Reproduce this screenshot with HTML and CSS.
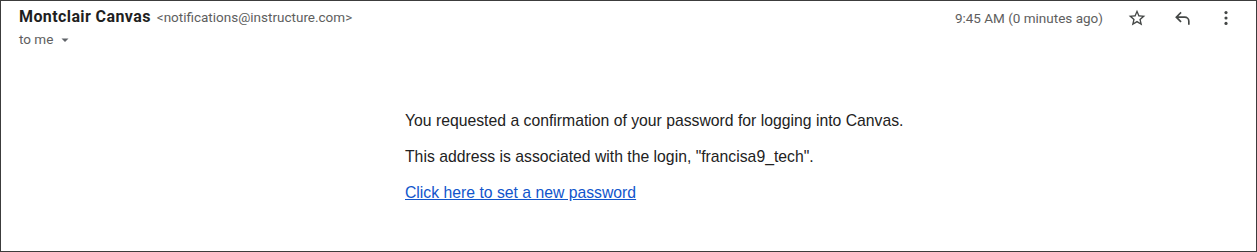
FILE: index.html
```html
<!DOCTYPE html>
<html>
<head>
<meta charset="utf-8">
<link rel="stylesheet" href="styles.css">
</head>
<body>
<div class="frame">
  <div class="header">
    <div class="sender">
      <div class="from"><span class="name">Montclair Canvas</span> <span class="addr">&lt;notifications@instructure.com&gt;</span></div>
      <div class="to">to me <svg class="caret" width="8" height="8" viewBox="0 0 8 8"><path d="M0.5 2.5h7L4 6z" fill="#5f6368"/></svg></div>
    </div>
    <div class="meta">
      <span class="time">9:45 AM (0 minutes ago)</span>
      <span class="icon star"><svg width="20" height="20" viewBox="0 0 24 24"><path fill="#444746" d="M22 9.24l-7.19-.62L12 2 9.19 8.63 2 9.24l5.46 4.73L5.82 21 12 17.27 18.18 21l-1.63-7.03L22 9.24zM12 15.4l-3.76 2.27 1-4.28-3.32-2.88 4.38-.38L12 6.1l1.71 4.04 4.38.38-3.320 2.88 1 4.28L12 15.4z"/></svg></span>
      <span class="icon reply"><svg width="20" height="20" viewBox="0 0 24 24"><path fill="none" stroke="#444746" stroke-width="2" stroke-linecap="square" stroke-linejoin="miter" d="M9 6l-5 5 5 5M4.5 11H14a5 5 0 0 1 5 5v3"/></svg></span>
      <span class="icon more"><svg width="20" height="20" viewBox="0 0 24 24"><circle cx="12" cy="5.5" r="1.9" fill="#444746"/><circle cx="12" cy="12" r="1.9" fill="#444746"/><circle cx="12" cy="18.5" r="1.9" fill="#444746"/></svg></span>
    </div>
  </div>
  <div class="content">
    <div class="mail">
      <p>You requested a confirmation of your password for logging into Canvas.</p>
      <p>This address is associated with the login, "francisa9_tech".</p>
      <p><a href="#">Click here to set a new password</a></p>
    </div>
  </div>
</div>
</body>
</html>
```

FILE: styles.css
```css
html, body {
  margin: 0;
  padding: 0;
  background: #fff;
}
.frame {
  width: 1257px;
  height: 252px;
  box-sizing: border-box;
  border: 1px solid #3c3c3c;
  font-family: Roboto, "Liberation Sans", Arial, sans-serif;
}
.header {
  display: flex;
  justify-content: space-between;
  padding: 5px 0 0 18px;
}
.from {
  line-height: 22px;
  height: 22px;
  white-space: nowrap;
}
.name {
  font-weight: 700;
  font-size: 16px;
  color: #1f1f1f;
  letter-spacing: 0.4px;
}
.addr {
  font-size: 13.5px;
  color: #5e5e5e;
  margin-left: 2px;
}
.to {
  font-size: 13.5px;
  color: #5e5e5e;
  line-height: 22px;
  display: flex;
  align-items: center;
  gap: 8px;
}
.caret {
  margin-top: 2px;
}
.meta {
  display: flex;
  align-items: center;
  height: 24px;
}
.time {
  font-size: 13.5px;
  color: #5e5e5e;
  margin-right: 24px;
}
.icon {
  width: 20px;
  height: 20px;
  display: flex;
  align-items: center;
  justify-content: center;
}
.star { margin-right: 26px; }
.reply { margin-right: 23px; }
.more { margin-right: 20px; }
.content {
  padding-top: 61px;
  padding-left: 404px;
}
.mail {
  font-family: "Liberation Sans", Arial, sans-serif;
  font-size: 15.75px;
  color: #222;
}
.mail p {
  margin: 0 0 17px 0;
  line-height: 19px;
}
.mail a {
  color: #1155cc;
}
```
